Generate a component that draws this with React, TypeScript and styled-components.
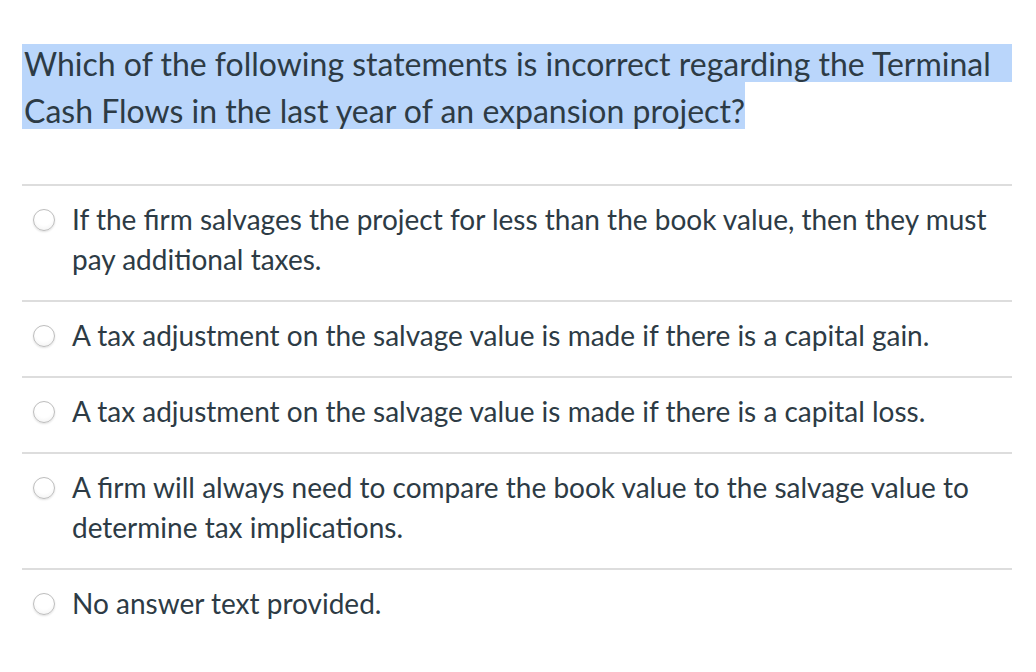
import React from 'react';
import styled, { createGlobalStyle } from 'styled-components';

const GlobalStyle = createGlobalStyle`
    body {
        margin: 0;
        background: #ffffff;
        font-family: Lato, "Open Sans", sans-serif;
        color: #2d3b45;
    }
`;

const answers = [
    'If the firm salvages the project for less than the book value, then they must pay additional taxes.',
    'A tax adjustment on the salvage value is made if there is a capital gain.',
    'A tax adjustment on the salvage value is made if there is a capital loss.',
    'A firm will always need to compare the book value to the salvage value to determine tax implications.',
    'No answer text provided.',
];

export default function App() {
    return (
        <>
            <GlobalStyle />
            <Page>
                <Question>
                    <Line $full>Which of the following statements is incorrect regarding the Terminal</Line>
                    <Line $pad={10}>Cash Flows in the last year of an expansion project?</Line>
                </Question>
                <Answers>
                    {answers.map((text, i) => (
                        <Answer key={i}>
                            <Radio />
                            <AnswerText>{text}</AnswerText>
                        </Answer>
                    ))}
                </Answers>
            </Page>
        </>
    );
}

const Page = styled.div`
    width: 990px;
    padding: 44px 0 0 22px;
`;

const Question = styled.div`
    font-size: 32px;
`;

const Line = styled.div<{ $full?: boolean; $pad?: number }>`
    display: ${(p) => (p.$full ? 'block' : 'inline-block')};
    background: #bad6fb;
    line-height: 37px;
    padding-top: ${(p) => p.$pad ?? 1}px;
    padding-left: 2px;
    white-space: nowrap;
`;

const Answers = styled.div`
    margin-top: 54px;
`;

const Answer = styled.div`
    display: flex;
    align-items: flex-start;
    gap: 17px;
    padding: 13px 0 21px 11px;
    border-top: 2px solid #dddddd;
`;

const Radio = styled.span`
    flex: none;
    width: 20px;
    height: 20px;
    margin-top: 10px;
    border-radius: 50%;
    border: 1px solid #bdbdbd;
    background: radial-gradient(circle at 50% 35%, #ffffff 50%, #eeeeee 100%);
    box-shadow: 0 1px 2px rgba(0, 0, 0, 0.12);
`;

const AnswerText = styled.div`
    font-size: 28px;
    line-height: 40px;
    padding-right: 20px;
`;
